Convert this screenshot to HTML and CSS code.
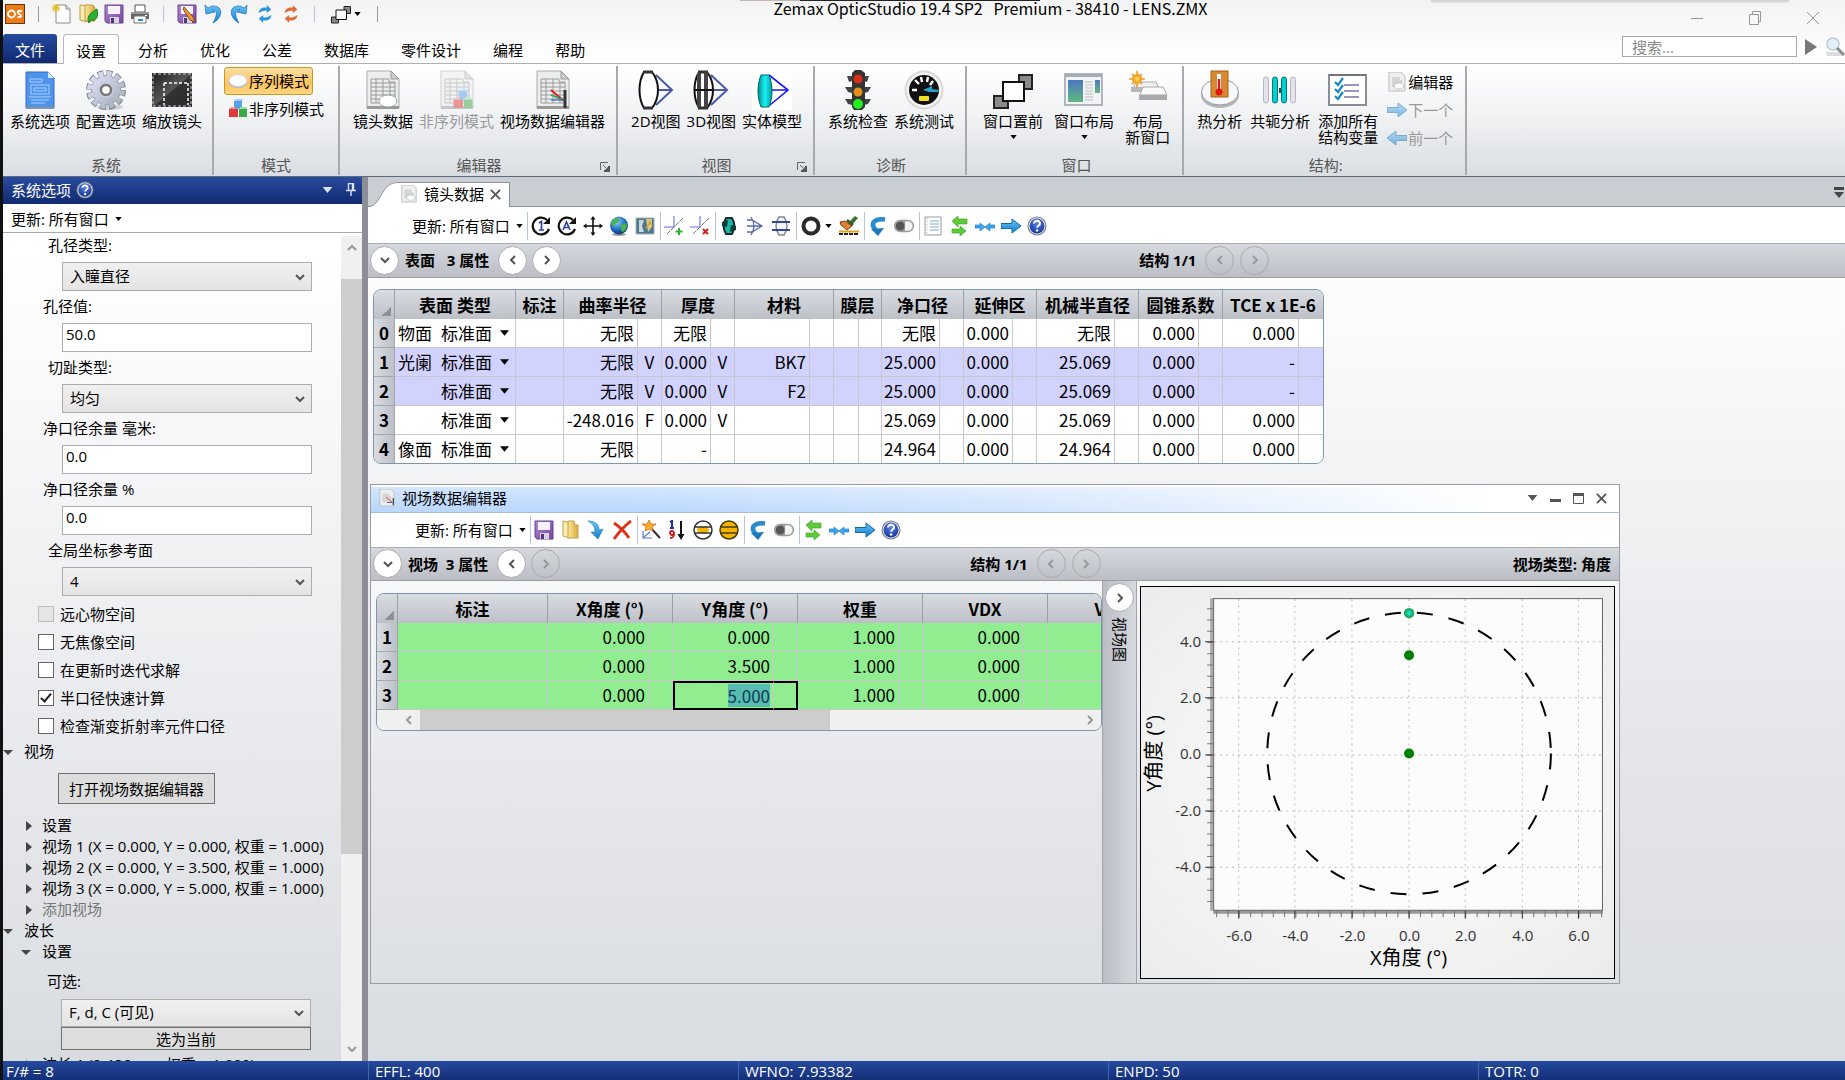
FILE: index.html
```html
<!DOCTYPE html>
<html lang="zh-CN">
<head>
<meta charset="utf-8">
<title>Zemax OpticStudio 19.4 SP2 Premium - 38410 - LENS.ZMX</title>
<link rel="stylesheet" href="styles.css">
</head>
<body>
<svg class="defs" aria-hidden="true">
  <defs>
    <linearGradient id="gBlue" x1="0" y1="0" x2="0" y2="1"><stop offset="0" stop-color="#6cc4f4"/><stop offset="1" stop-color="#0e7fd0"/></linearGradient>
    <linearGradient id="gGrey" x1="0" y1="0" x2="1" y2="1"><stop offset="0" stop-color="#e2e0fa"/><stop offset="1" stop-color="#a4b0ba"/></linearGradient>
    <linearGradient id="gDark" x1="0" y1="0" x2="1" y2="1"><stop offset="0" stop-color="#222"/><stop offset=".5" stop-color="#555"/><stop offset=".52" stop-color="#333"/><stop offset="1" stop-color="#2a2a2a"/></linearGradient>
    <linearGradient id="gFolder" x1="0" y1="0" x2="1" y2="0"><stop offset="0" stop-color="#f8e8a0"/><stop offset="1" stop-color="#dca83c"/></linearGradient>
    <linearGradient id="gPurple" x1="0" y1="0" x2="1" y2="1"><stop offset="0" stop-color="#b48ad0"/><stop offset="1" stop-color="#7444a0"/></linearGradient>
    <linearGradient id="gShot" x1="0" y1="0" x2="0" y2="1"><stop offset="0" stop-color="#4a78c0"/><stop offset="1" stop-color="#60b880"/></linearGradient>
    <linearGradient id="gLens" x1="0" y1="0" x2="1" y2="0"><stop offset="0" stop-color="#008a90"/><stop offset=".5" stop-color="#18f4f4"/><stop offset="1" stop-color="#009aa0"/></linearGradient>
    <radialGradient id="gGlobe" cx=".4" cy=".3" r=".8"><stop offset="0" stop-color="#8ad0ff"/><stop offset=".6" stop-color="#1a62b8"/><stop offset="1" stop-color="#082a60"/></radialGradient>
    <radialGradient id="gHelp" cx=".5" cy=".3" r=".8"><stop offset="0" stop-color="#5a84e8"/><stop offset="1" stop-color="#0c2a90"/></radialGradient>
    <radialGradient id="gSun"><stop offset="0" stop-color="#ffe060"/><stop offset="1" stop-color="#f09010"/></radialGradient>
    <radialGradient id="gPoint"><stop offset="0" stop-color="#20f0f0"/><stop offset=".9" stop-color="#10a050"/><stop offset="1" stop-color="#008000"/></radialGradient>
    <radialGradient id="gChart" cx=".5" cy=".5" r=".75"><stop offset="0" stop-color="#fff"/><stop offset="1" stop-color="#eaeaea"/></radialGradient>
  </defs>
  <symbol id="caret" viewBox="0 0 8 5"><path d="M0 0h8l-4 5z" fill="currentColor"/></symbol>
  <symbol id="chev-d" viewBox="0 0 12 12"><path d="M2 4l4 4 4-4" fill="none" stroke="currentColor" stroke-width="2"/></symbol>
  <symbol id="chev-u" viewBox="0 0 12 12"><path d="M2 8l4-4 4 4" fill="none" stroke="currentColor" stroke-width="2"/></symbol>
  <symbol id="chev-l" viewBox="0 0 12 12"><path d="M8 2L4 6l4 4" fill="none" stroke="currentColor" stroke-width="2"/></symbol>
  <symbol id="chev-r" viewBox="0 0 12 12"><path d="M4 2l4 4-4 4" fill="none" stroke="currentColor" stroke-width="2"/></symbol>
  <symbol id="cross" viewBox="0 0 12 12"><path d="M1 1l10 10M11 1L1 11" fill="none" stroke="currentColor" stroke-width="2"/></symbol>
  <symbol id="help" viewBox="0 0 20 20"><circle cx="10" cy="10" r="9.5" fill="#777c84"/><circle cx="10" cy="10" r="8.4" fill="#e0e2e6"/><circle cx="10" cy="10" r="7.4" fill="url(#gHelp)"/><path d="M7 7.6c0-3.8 6.2-3.6 6 0-.1 2-2.8 2-2.8 4.2" fill="none" stroke="#fff" stroke-width="2"/><circle cx="10.1" cy="14.5" r="1.3" fill="#fff"/></symbol>

  <symbol id="new" viewBox="0 0 20 20"><path d="M4 1h10l4 4v14H4z" fill="#fdfdfd" stroke="#8a8a8a"/><path d="M14 1v4h4" fill="#ddd" stroke="#8a8a8a"/><path d="M4 0v8M0 4h8M1 1l6 6M7 1L1 7" stroke="#e6c020" stroke-width="1.3"/></symbol>
  <symbol id="open" viewBox="0 0 20 20"><path d="M2 1l7 1v16l-7-2z" fill="#fbeeb4" stroke="#c09a40"/><path d="M7 1h8l2 3v13H7z" fill="url(#gFolder)" stroke="#c09a40"/><path d="M19 5c2 8-1 12-6 11l-2 3c-3-6 1-10 8-14z" fill="#30b030" stroke="#147c1c"/></symbol>
  <symbol id="folder" viewBox="0 0 20 20"><path d="M3 1l7 2v15l-7-2z" fill="#fbeeb4" stroke="#c8a040"/><path d="M8 1h6l1 4h3v13H8z" fill="url(#gFolder)" stroke="#c8a040"/></symbol>
  <symbol id="save" viewBox="0 0 20 20"><path d="M1 1h18v18H3l-2-2z" fill="url(#gPurple)" stroke="#684090"/><path d="M4 2h12v8H4z" fill="#f4f2fa"/><path d="M6 13h9v6H6z" fill="#d8d4de"/><path d="M7 14h3v5H7z" fill="#503878"/></symbol>
  <symbol id="saveedit" viewBox="0 0 20 20"><use href="#save"/><path d="M7 3l9 10 2 5-5-2L6 5z" fill="#f09a30" stroke="#8a4a20"/></symbol>
  <symbol id="print" viewBox="0 0 20 20"><path d="M5 1h10v7H5z" fill="#fff" stroke="#555"/><path d="M1 8h18v7H1z" fill="#666"/><path d="M1 8h18v2H1z" fill="#999"/><path d="M4 12h12v7H4z" fill="#fff" stroke="#777"/><path d="M8 15h5v2H8z" fill="#2a90d0"/><path d="M15 11h2v1h-2z" fill="#fff"/></symbol>
  <symbol id="undo" viewBox="0 0 20 20"><path d="M2 1l1 9 9-2-3-2c5-1 6 5 1 13 10-5 11-18-1-17L5 4z" fill="url(#gBlue)" stroke="#1a70b8" stroke-width=".7"/></symbol>
  <symbol id="redo" viewBox="0 0 20 20"><path d="M18 1l-1 9-9-2 3-2c-5-1-6 5-1 13C0 14-1 1 11 2l4 2z" fill="url(#gBlue)" stroke="#1a70b8" stroke-width=".7"/></symbol>
  <symbol id="refresh" viewBox="0 0 20 20"><path d="M3 9c0-5 5-7 9-6V0l5 5-5 4V6C8 6 6 7 3 9zM17 11c0 5-5 7-9 6v3l-5-5 5-4v3c4 0 6-1 9-3z" fill="currentColor"/></symbol>
  <symbol id="wins" viewBox="0 0 40 40"><path d="M26 5h13v14H26zM1 26h14v12H1z" fill="#8a8a8a" stroke="#222" stroke-width="2"/><path d="M10 12h21v19H10z" fill="#fff" stroke="#111" stroke-width="2"/></symbol>

  <symbol id="b-doc" viewBox="0 0 40 40"><path d="M6 2h22l6 6v30H6z" fill="#4f93ea" stroke="#2c6cc8"/><path d="M28 2v6h6z" fill="#d8e8fc"/><path d="M6 37h28v2H6z" fill="#8a929c"/><path d="M10 9h12v3H10zM11 15h18v9H11zM14 18h12v3H14zM9 27h22M11 30h18M11 33h14" fill="none" stroke="#a8d0ff"/></symbol>
  <symbol id="b-gear" viewBox="0 0 40 40"><ellipse cx="24" cy="37" rx="13" ry="3" fill="#cfd2d4"/><circle cx="20" cy="20" r="16.5" fill="none" stroke="#7c8494" stroke-width="7" stroke-dasharray="5.600 3.040"/><circle cx="20" cy="20" r="14.500" fill="url(#gGrey)" stroke="#8c94a4"/><circle cx="20" cy="20" r="16" fill="none" stroke="url(#gGrey)" stroke-width="6" stroke-dasharray="4.400 3.978" stroke-dashoffset="-.5"/><circle cx="20" cy="20" r="8" fill="#c8ccd8"/><circle cx="20" cy="20" r="5" fill="#fff" stroke="#777" stroke-width="2.500"/></symbol>
  <symbol id="b-scale" viewBox="0 0 40 40"><path d="M0 3h40v34H0z" fill="url(#gDark)"/><path d="M1 4h38v32H1z" fill="none" stroke="#ccc" stroke-width="1" stroke-dasharray="3 2"/><path d="M12 13v22M36 13v22M12 13h24" fill="none" stroke="#fff" stroke-width="1.500" stroke-dasharray="3 2"/></symbol>
  <symbol id="b-sheet" viewBox="0 0 40 40"><path d="M4 1h24l8 8v29H4z" fill="#eceeee" stroke="#aaa"/><path d="M28 1v8h8z" fill="#ccc" stroke="#999"/><path d="M4 36h32v3H4z" fill="#999"/><path d="M8 9h18v3h6v21H8zM8 13h24M8 17h24M8 21h24M8 25h24M8 29h24M13 9v24M20 9v24M27 13v20" fill="none" stroke="#999"/></symbol>
  <symbol id="b-lens" viewBox="0 0 40 40"><use href="#b-sheet"/><ellipse cx="25" cy="31" rx="9" ry="6" fill="#fff" stroke="#98a8b0"/></symbol>
  <symbol id="cubes" viewBox="0 0 20 20"><path d="M6 2h8v8H6z" fill="#5aa0e8"/><path d="M6 2l2-2h7l-1 2z" fill="#a0ccff"/><path d="M1 10h9v8H1z" fill="#e03838"/><path d="M1 10l2-2h4v2z" fill="#ff9090"/><path d="M11 10h8v8h-8z" fill="#38a848"/><path d="M11 10l1-2h6l1 2z" fill="#90e0a0"/></symbol>
  <symbol id="b-nsc" viewBox="0 0 40 40"><use href="#b-sheet"/><use href="#cubes" x="15" y="19" width="22" height="21"/></symbol>
  <symbol id="b-field" viewBox="0 0 40 40"><use href="#b-sheet"/><path d="M32 20v18" stroke="#333" stroke-width="3"/><path d="M18 20l13 11" stroke="#f01818" stroke-width="1.8"/><path d="M18 25l13 5" stroke="#20a050" stroke-width="1.5"/><path d="M18 30h13" stroke="#3060d0" stroke-width="1.2"/></symbol>
  <symbol id="lens" viewBox="0 0 20 20"><ellipse cx="10" cy="11" rx="9.5" ry="6" fill="#b4b8bc"/><ellipse cx="10" cy="9.5" rx="9" ry="6" fill="#fafcff" stroke="#ccd4dc"/></symbol>
  <symbol id="b-2d" viewBox="0 0 40 40"><path d="M20 5l16 15-16 15M23 20h13" fill="none" stroke="#4a5aa8" stroke-width="2"/><path d="M8 2h8c8 10 8 26 0 36H8c-6-10-6-26 0-36z" fill="#fff" stroke="#111" stroke-width="2"/><path d="M7 2h10M7 38h10" stroke="#333" stroke-width="3"/></symbol>
  <symbol id="b-3d" viewBox="0 0 40 40"><use href="#b-2d"/><path d="M8 3v34M15 3v34" stroke="#444" stroke-width="4"/><path d="M3 20h19" stroke="#111" stroke-width="2"/></symbol>
  <symbol id="b-solid" viewBox="0 0 40 40"><path d="M0 0h40v40H0z" fill="#fff"/><path d="M17 5l19 15-18 15M20 20h16" fill="none" stroke="#1818f0" stroke-width="1.6"/><path d="M9 5h8c4 10 4 22 0 32H9C5 27 5 15 9 5z" fill="url(#gLens)" stroke="#066"/></symbol>
  <symbol id="b-light" viewBox="0 0 40 40"><path d="M9 6h5v5l-3 1zM31 6h-5v5l3 1zM7 17h7v6l-4-1zM33 17h-7v6l4-1zM7 29h7v6l-4-1zM33 29h-7v6l4-1z" fill="#444"/><path d="M14 3l3-3h6l4 3v34l-3 3h-8l-2-3z" fill="#333"/><circle cx="20" cy="9" r="4.5" fill="#d83018"/><circle cx="20" cy="22" r="4.5" fill="#e09018"/><circle cx="20" cy="34" r="5" fill="#20f020"/></symbol>
  <symbol id="b-gauge" viewBox="0 0 40 40"><circle cx="20" cy="20" r="19.5" fill="#d8d8d8"/><circle cx="20" cy="20" r="17.5" fill="#f4f4f4"/><circle cx="20" cy="20" r="15" fill="#111"/><path d="M8 20h5M11 10l4 4M17 7l1 5M24 7l-1 5M29 11l-3 4" stroke="#fff" stroke-width="2.4"/><path d="M19 20l9-4v3l7 1-1 2h-9z" fill="#28a0d0"/><rect x="15" y="26" width="10" height="5" rx="1" fill="#f4e020"/></symbol>
  <symbol id="b-layout" viewBox="0 0 40 40"><path d="M1 4h37v31H1z" fill="#f2f4f6" stroke="#99a0a8" stroke-width="1.5"/><path d="M1 4h37v3H1z" fill="#a4acb4"/><path d="M4 10h15v22H4z" fill="url(#gShot)"/><path d="M21 12h8M21 15h8M21 18h8M21 21h8M21 24h8M21 27h8M21 30h8" stroke="#bbb"/><path d="M31 10h5v13h-5z" fill="url(#gShot)"/></symbol>
  <symbol id="b-newwin" viewBox="0 0 40 40"><path d="M8 12h20l3 7H5z" fill="#f0f0f0" stroke="#aaa"/><path d="M3 17h27v5H3z" fill="#b8b8b8"/><path d="M15 17h20l4 8H12z" fill="#fafafa" stroke="#aaa"/><path d="M11 25h28v5H11z" fill="#aaa"/><path d="M9 1v16M1 9h16M4 4l10 10M14 4L4 14" stroke="#f09a20" stroke-width="1.600"/><circle cx="9" cy="9" r="5" fill="url(#gSun)"/></symbol>
  <symbol id="b-thermal" viewBox="0 0 40 40"><ellipse cx="20" cy="25" rx="19" ry="13" fill="#b4b8bc"/><ellipse cx="20" cy="22" rx="18.500" ry="13" fill="#f6fafc" stroke="#999"/><rect x="11" y="1" width="17" height="26" fill="#d88830" stroke="#a86018"/><path d="M19 4v16" stroke="#fff" stroke-width="4"/><path d="M19 9v13" stroke="#d02020" stroke-width="2.5"/><circle cx="19" cy="22" r="3.5" fill="#e01818"/></symbol>
  <symbol id="b-conj" viewBox="0 0 40 40"><rect x="3.500" y="7" width="5" height="26" rx="2.500" fill="#e4e2ec" stroke="#b8b4c4"/><rect x="12.500" y="7" width="5" height="26" rx="2.500" fill="#00d0d0" stroke="#077"/><path d="M19 18h2v5h-2z" fill="#255"/><rect x="21.500" y="7" width="5" height="26" rx="2.500" fill="#00d0d0" stroke="#077"/><rect x="30.500" y="7" width="5" height="26" rx="2.500" fill="#e4e2ec" stroke="#b8b4c4"/></symbol>
  <symbol id="b-vars" viewBox="0 0 40 40"><path d="M1 5h37v30H1z" fill="#fff" stroke="#8a8e94" stroke-width="2"/><path d="M1 5h37" stroke="#707478" stroke-width="2"/><path d="M16 15h15M16 21h15M16 27h15" stroke="#7870a8" stroke-width="1.5"/><path d="M7 12l3 3 5-7M7 19l3 3 5-7M7 26l3 3 5-7" fill="none" stroke="#1a88c8" stroke-width="2.2"/></symbol>
  <symbol id="doc-s" viewBox="0 0 20 20"><path d="M2 0h12l4 4v15H2z" fill="#eef0f0" stroke="#bbb"/><path d="M5 5h8v3h2v7H5z" fill="#d4d6d6"/><ellipse cx="12" cy="14" rx="4.5" ry="3" fill="#fff" stroke="#aaa" stroke-width=".6"/></symbol>
  <symbol id="docf-s" viewBox="0 0 20 20"><path d="M2 0h12l4 4v15H2z" fill="#eef0f0" stroke="#bbb"/><path d="M5 5h8v3h2v7H5z" fill="#d4d6d6"/><path d="M9 9l7 6" stroke="#e03030"/><path d="M17 10v8" stroke="#555" stroke-width="1.6"/><path d="M10 15h6" stroke="#4060c0"/></symbol>
  <symbol id="ar-r" viewBox="0 0 20 20"><path d="M0 7.500h11V3l9 7-9 7v-4.500H0z" fill="url(#gBlue)" stroke="#1468b0"/></symbol>
  <symbol id="ar-l" viewBox="0 0 20 20"><path d="M20 7.500H9V3l-9 7 9 7v-4.500h11z" fill="url(#gBlue)" stroke="#1468b0"/></symbol>
  <symbol id="launch" viewBox="0 0 10 10"><path d="M.5 8V.5H8M3 3l3 3" fill="none" stroke="#666"/><path d="M9 4v5H4z" fill="#555"/><path d="M4 9h5V4" fill="none" stroke="#555" stroke-width="2"/></symbol>
  <symbol id="search" viewBox="0 0 20 20"><path d="M1 15h13l4 4H2z" fill="#ddd"/><circle cx="8" cy="7" r="6" fill="#e2f0fa" stroke="#c0c8d0" stroke-width="1.5"/><path d="M12 11l7 7" stroke="#8a8a8a" stroke-width="3"/></symbol>

  <symbol id="rot1" viewBox="0 0 20 20"><path d="M16 4a8.400 8.400 0 1 0 2 9" fill="none" stroke="#111" stroke-width="2.200"/><path d="M19 1v7h-7z" fill="#111"/><path d="M8 7l2.500-1.500V14M8 14h5" fill="none" stroke="#2a3ea0" stroke-width="1.600"/></symbol>
  <symbol id="rotA" viewBox="0 0 20 20"><path d="M16 4a8.400 8.400 0 1 0 2 9" fill="none" stroke="#111" stroke-width="2.200"/><path d="M19 1v7h-7z" fill="#111"/><path d="M6 14L9.500 6 13 14M7.500 11.500h4" fill="none" stroke="#2a3ea0" stroke-width="1.600"/></symbol>
  <symbol id="move" viewBox="0 0 20 20"><path d="M10 2v16M2 10h16" stroke="#111" stroke-width="1.6"/><path d="M7.500 3.500L10 0l2.500 3.500zM7.500 16.500L10 20l2.500-3.500zM3.500 7.500L0 10l3.500 2.500zM16.500 7.500L20 10l-3.500 2.500z" fill="#111"/></symbol>
  <symbol id="globe" viewBox="0 0 20 20"><ellipse cx="10" cy="18.500" rx="7" ry="1.500" fill="#999"/><circle cx="10" cy="9.500" r="9" fill="url(#gGlobe)"/><path d="M5 3c4-2 6 0 5 3l-4 2-1 3-3-3zM12 9l5-2c2 4 0 8-4 9l-1-3z" fill="#48b848"/></symbol>
  <symbol id="map" viewBox="0 0 20 20"><path d="M1 2h18v16H1z" fill="#4a7890" stroke="#a8b0b4"/><path d="M4 4h5l-2 6 2 6H4z" fill="#cfd8d8"/><path d="M11 3h6v8l-4 5z" fill="#d8c888"/><path d="M11 12l4-6 2 3" fill="none" stroke="#e0a020" stroke-width="1.500"/></symbol>
  <symbol id="axadd" viewBox="0 0 20 20"><path d="M10 0v11H0" fill="none" stroke="#9a9af0" stroke-width="1.600"/><path d="M19 2L3 18" stroke="#777" stroke-dasharray="5 1"/><path d="M15 12v7M11.500 15.500h7" stroke="#30b030" stroke-width="2"/></symbol>
  <symbol id="axdel" viewBox="0 0 20 20"><path d="M10 0v11H0" fill="none" stroke="#9a9af0" stroke-width="1.600"/><path d="M19 2L3 18" stroke="#777" stroke-dasharray="5 1"/><path d="M13 13l5 5M18 13l-5 5" stroke="#d82020" stroke-width="2"/></symbol>
  <symbol id="lensrot" viewBox="0 0 20 20"><path d="M7 2h6c3 5 3 11 0 16H7C4 13 4 7 7 2z" fill="#18b8a8" stroke="#1a2a2a" stroke-width="2"/><path d="M3 10V6l6-2-1 7zM17 10v4l-6 2 1-7z" fill="#143a38"/></symbol>
  <symbol id="lensray" viewBox="0 0 20 20"><path d="M6 1c4 6 4 12 0 18M2 4h5l10 6-10 6H2M2 10h15" fill="none" stroke="#5a6ab0" stroke-width="1.300"/></symbol>
  <symbol id="lensbox" viewBox="0 0 20 20"><path d="M8 1h5c4 6 4 12 0 18H8C4 13 4 7 8 1z" fill="#f4f4fa" stroke="#888" stroke-width="1.400"/><path d="M1 6h18M1 14h18" stroke="#3048a0" stroke-width="1.800"/></symbol>
  <symbol id="ring" viewBox="0 0 20 20"><circle cx="10" cy="10" r="7.500" fill="none" stroke="#2a2a2a" stroke-width="4"/></symbol>
  <symbol id="brush" viewBox="0 0 20 20"><path d="M9 7l7-7 3 2-7 8z" fill="#3c7030"/><path d="M1 6l5-1 7 5-5 4-6-5z" fill="#e08030" stroke="#803c10"/><path d="M8 4l6 5" stroke="#355c28" stroke-width="2.500"/><path d="M0 15.500h20" stroke="#e0a020" stroke-width="2"/><path d="M0 18h20" stroke="#222" stroke-width="2" stroke-dasharray="4 1"/></symbol>
  <symbol id="bluehook" viewBox="0 0 20 20"><path d="M17 3.500C7 2 1 7 8 14" fill="none" stroke="#2a8ccc" stroke-width="4.500"/><path d="M3 13l13-1-6 8z" fill="#1a78bc"/></symbol>
  <symbol id="toggle" viewBox="0 0 20 20"><rect x=".7" y="4.500" width="18.600" height="11" rx="5.500" fill="#f2f2f2" stroke="#999" stroke-width="1.400"/><path d="M6 4.500h5v11H6z" fill="#999"/><circle cx="6" cy="10" r="4.500" fill="#555"/></symbol>
  <symbol id="list" viewBox="0 0 20 20"><path d="M2 1h16v18H2z" fill="#fff" stroke="#999"/><path d="M4 2v16" stroke="#bbb" stroke-dasharray="1 1"/><path d="M7 5h9M7 8h9M7 11h9M7 14h9" stroke="#a8c8dc" stroke-width="1.400"/></symbol>
  <symbol id="swap" viewBox="0 0 20 20"><path d="M3 5l6-5v3h9v5H9v3zM17 15l-6 5v-3H3v-4h8v-3z" fill="#5ccc38" stroke="#3c9c20" stroke-width=".6"/></symbol>
  <symbol id="squeeze" viewBox="0 0 20 20"><path d="M0 9h5V7l5 4-5 4v-3H0zM20 9h-5V7l-5 4 5 4v-3h5z" fill="#38a8f0" stroke="#1870b8" stroke-width=".6"/></symbol>
  <symbol id="curvedn" viewBox="0 0 20 20"><path d="M2 1c8 0 11 4 11 9l4-1-5 10-7-7h4C9 7 7 4 2 1z" fill="url(#gBlue)" stroke="#1878b8" stroke-width=".6"/></symbol>
  <symbol id="redx" viewBox="0 0 20 20"><path d="M2 3c6 4 11 9 15 15M19 1C12 6 7 12 2 19" fill="none" stroke="#e03018" stroke-width="2.800"/></symbol>
  <symbol id="wand" viewBox="0 0 20 20"><path d="M9 7l10 11" stroke="#333" stroke-width="2"/><path d="M8 0l2 4h5l-4 3 1 4-4-2-4 2 1-4-4-3h5z" fill="#f8b020" stroke="#d85838" stroke-width=".7"/><path d="M2 11v7h9M3 17l6-5" fill="none" stroke="#5a78c0" stroke-width="1.200"/></symbol>
  <symbol id="sort" viewBox="0 0 20 20"><path d="M3 2l2-1v7M3 8h4" fill="none" stroke="#2030a0" stroke-width="2"/><circle cx="5" cy="13" r="2" fill="none" stroke="#d01818" stroke-width="1.800"/><path d="M7 13c0 4-1 5-4 5" fill="none" stroke="#d01818" stroke-width="1.800"/><path d="M14 1v14" stroke="#111" stroke-width="2"/><path d="M10.500 14h7L14 20z" fill="#111"/></symbol>
  <symbol id="circ1" viewBox="0 0 20 20"><circle cx="10" cy="10" r="9" fill="#fff" stroke="#333" stroke-width="1.500"/><ellipse cx="10" cy="10" rx="6" ry="3.500" fill="#f4b400"/><path d="M2 7h16M2 13h16" stroke="#333" stroke-width="1.300"/></symbol>
  <symbol id="circ2" viewBox="0 0 20 20"><circle cx="10" cy="10" r="9" fill="#f4b400" stroke="#4a3c00" stroke-width="1.500"/><path d="M2 7h16M2 13h16" stroke="#4a3c00" stroke-width="1.300"/></symbol>
</svg>

<header class="titlebar">
  <div class="qat">
    <svg class="i20 logo" viewBox="0 0 20 20"><path d="M0 0h20v20H0z" fill="#5a3a18"/><path d="M1 1h18v18H1z" fill="#ee7c16"/><circle cx="6.500" cy="10" r="3.500" fill="none" stroke="#fff" stroke-width="1.800"/><path d="M17 7.500c-4-2-5.500 1-3 2.300s3.500 4-1.500 3.200" fill="none" stroke="#fff" stroke-width="1.800"/></svg>
    <span class="qsep"></span>
    <button aria-label="新建"><svg class="i20"><use href="#new"/></svg></button>
    <button aria-label="打开"><svg class="i20"><use href="#open"/></svg></button>
    <button aria-label="保存"><svg class="i20"><use href="#save"/></svg></button>
    <button aria-label="打印"><svg class="i20"><use href="#print"/></svg></button>
    <span class="qsep light"></span>
    <button aria-label="另存为"><svg class="i20"><use href="#saveedit"/></svg></button>
    <button aria-label="撤消"><svg class="i20"><use href="#undo"/></svg></button>
    <button aria-label="重做"><svg class="i20"><use href="#redo"/></svg></button>
    <button aria-label="更新" class="blue"><svg class="i20"><use href="#refresh"/></svg></button>
    <button aria-label="全部更新" class="orange"><svg class="i20"><use href="#refresh"/></svg></button>
    <span class="qsep light"></span>
    <button aria-label="窗口" class="winsbtn"><svg class="i20"><use href="#wins"/></svg><svg class="caret"><use href="#caret"/></svg></button>
    <span class="qsep"></span>
  </div>
  <div class="apptitle">Zemax OpticStudio 19.4 SP2&nbsp;&nbsp; Premium - 38410 - LENS.ZMX</div>
  <div class="winctl">
    <button aria-label="最小化"><svg viewBox="0 0 14 14"><path d="M1 7.500h12" stroke="#999"/></svg></button>
    <button aria-label="还原"><svg viewBox="0 0 14 14"><path d="M1.500 3.500h9v10h-9zM4.500 3v-2.500h8v10H11" fill="none" stroke="#999"/></svg></button>
    <button aria-label="关闭"><svg viewBox="0 0 14 14"><path d="M1 1l12 12M13 1L1 13" stroke="#999"/></svg></button>
  </div>
</header>

<nav class="tabs">
  <button class="tab file">文件</button>
  <button class="tab active">设置</button>
  <button class="tab">分析</button>
  <button class="tab">优化</button>
  <button class="tab">公差</button>
  <button class="tab">数据库</button>
  <button class="tab">零件设计</button>
  <button class="tab">编程</button>
  <button class="tab">帮助</button>
  <form class="search">
    <input type="search" placeholder="搜索..." aria-label="搜索">
    <button type="button" aria-label="下一条"><svg width="12" height="16" viewBox="0 0 12 16"><path d="M0 0l12 8-12 8z" fill="#777"/></svg></button>
    <button type="button" aria-label="查找"><svg class="i20"><use href="#search"/></svg></button>
  </form>
</nav>

<section class="ribbon">
  <div class="group g-sys"><div class="items">
    <button class="big"><svg><use href="#b-doc"/></svg>系统选项</button>
    <button class="big"><svg><use href="#b-gear"/></svg>配置选项</button>
    <button class="big"><svg><use href="#b-scale"/></svg>缩放镜头</button>
  </div><h2>系统</h2></div>
  <div class="group g-mode"><div class="items column">
    <button class="small on"><svg><use href="#lens"/></svg>序列模式</button>
    <button class="small"><svg><use href="#cubes"/></svg>非序列模式</button>
  </div><h2>模式</h2></div>
  <div class="group"><div class="items">
    <button class="big"><svg><use href="#b-lens"/></svg>镜头数据</button>
    <button class="big" disabled><svg><use href="#b-nsc"/></svg>非序列模式</button>
    <button class="big"><svg><use href="#b-field"/></svg>视场数据编辑器</button>
  </div><h2>编辑器</h2><svg class="launch"><use href="#launch"/></svg></div>
  <div class="group"><div class="items">
    <button class="big"><svg><use href="#b-2d"/></svg>2D视图</button>
    <button class="big"><svg><use href="#b-3d"/></svg>3D视图</button>
    <button class="big"><svg><use href="#b-solid"/></svg>实体模型</button>
  </div><h2>视图</h2><svg class="launch"><use href="#launch"/></svg></div>
  <div class="group"><div class="items">
    <button class="big"><svg><use href="#b-light"/></svg>系统检查</button>
    <button class="big"><svg><use href="#b-gauge"/></svg>系统测试</button>
  </div><h2>诊断</h2></div>
  <div class="group wide"><div class="items">
    <button class="big"><svg><use href="#wins"/></svg>窗口置前<svg class="caret"><use href="#caret"/></svg></button>
    <button class="big"><svg><use href="#b-layout"/></svg>窗口布局<svg class="caret"><use href="#caret"/></svg></button>
    <button class="big"><svg><use href="#b-newwin"/></svg>布局<br>新窗口</button>
  </div><h2>窗口</h2></div>
  <div class="group g-conf"><div class="items">
    <button class="big"><svg><use href="#b-thermal"/></svg>热分析</button>
    <button class="big"><svg><use href="#b-conj"/></svg>共轭分析</button>
    <button class="big"><svg><use href="#b-vars"/></svg>添加所有<br>结构变量</button>
    <div class="column">
      <button class="small"><svg><use href="#doc-s"/></svg>编辑器</button>
      <button class="small" disabled><svg><use href="#ar-r"/></svg>下一个</button>
      <button class="small" disabled><svg><use href="#ar-l"/></svg>前一个</button>
    </div>
  </div><h2>结构:</h2></div>
</section>

<main>
  <aside class="side">
    <div class="sidehead"><h2>系统选项</h2><svg class="i18"><use href="#help"/></svg>
      <span class="sidectl"><svg class="dn"><use href="#caret"/></svg><svg width="10" height="13" viewBox="0 0 10 13"><path d="M2.500 7V.500h5V7M0 7.500h10M5 8v5M6.500 1v6" fill="none" stroke="#dce4f4" stroke-width="1.400"/></svg></span></div>
    <button class="update">更新: 所有窗口<svg class="caret"><use href="#caret"/></svg></button>
    <div class="sidescroll">
      <form class="sidebody">
        <div class="field"><label class="in" for="f1">孔径类型:</label><div class="sel"><select id="f1"><option>入瞳直径</option></select><svg><use href="#chev-d"/></svg></div></div>
        <div class="field"><label for="f2">孔径值:</label><input id="f2" type="text" value="50.0"></div>
        <div class="field"><label class="in" for="f3">切趾类型:</label><div class="sel"><select id="f3"><option>均匀</option></select><svg><use href="#chev-d"/></svg></div></div>
        <div class="field"><label for="f4">净口径余量 毫米:</label><input id="f4" type="text" value="0.0"></div>
        <div class="field"><label for="f5">净口径余量 %</label><input id="f5" type="text" value="0.0"></div>
        <div class="field"><label class="in" for="f6">全局坐标参考面</label><div class="sel"><select id="f6"><option>4</option></select><svg><use href="#chev-d"/></svg></div></div>
        <div class="checks">
          <label><input type="checkbox" disabled>远心物空间</label>
          <label><input type="checkbox">无焦像空间</label>
          <label><input type="checkbox">在更新时迭代求解</label>
          <label><input type="checkbox" checked>半口径快速计算</label>
          <label><input type="checkbox">检查渐变折射率元件口径</label>
        </div>
        <div class="node top open">视场</div>
        <button type="button" class="openfield">打开视场数据编辑器</button>
        <div class="node">设置</div>
        <div class="node">视场 1 (X = 0.000, Y = 0.000, 权重 = 1.000)</div>
        <div class="node">视场 2 (X = 0.000, Y = 3.500, 权重 = 1.000)</div>
        <div class="node">视场 3 (X = 0.000, Y = 5.000, 权重 = 1.000)</div>
        <div class="node dim">添加视场</div>
        <div class="node top open">波长</div>
        <div class="node open">设置</div>
        <div class="wave">
          <label for="f7">可选:</label>
          <div class="sel"><select id="f7"><option>F, d, C (可见)</option></select><svg><use href="#chev-d"/></svg></div>
          <button type="button">选为当前</button>
        </div>
        <div class="node">波长 1 (0.486 um, 权重 = 1.000)</div>
      </form>
      <div class="vbar"><svg><use href="#chev-u"/></svg><div class="vthumb"></div><svg><use href="#chev-d"/></svg></div>
    </div>
  </aside>

  <section class="work">
    <div class="doctabs">
      <svg class="tabcurve" viewBox="0 0 30 25"><path d="M0 25C14 25 12 0 30 0v25z" fill="#fff"/><path d="M0 24.500C14 24.500 12 .500 30 .500" fill="none" stroke="#8b929a"/></svg>
      <div class="doctab"><svg class="i18"><use href="#doc-s"/></svg>镜头数据<button aria-label="关闭"><svg><use href="#cross"/></svg></button></div>
      <svg class="tabmenu" width="10" height="11" viewBox="0 0 10 11"><path d="M0 0h10v3H0zM0 5h10l-5 6z" fill="#444"/></svg>
    </div>
    <div class="toolbar">
      <button class="upd">更新: 所有窗口<svg class="caret"><use href="#caret"/></svg></button>
      <button aria-label="更新一"><svg><use href="#rot1"/></svg></button><button aria-label="自动更新"><svg><use href="#rotA"/></svg></button><button aria-label="移动"><svg><use href="#move"/></svg></button><button aria-label="全局"><svg><use href="#globe"/></svg></button><button aria-label="地图"><svg><use href="#map"/></svg></button><span class="sep"></span>
      <button aria-label="添加坐标"><svg><use href="#axadd"/></svg></button><button aria-label="删除坐标"><svg><use href="#axdel"/></svg></button><span class="sep"></span>
      <button aria-label="旋转元件"><svg><use href="#lensrot"/></svg></button><button aria-label="光线"><svg><use href="#lensray"/></svg></button><button aria-label="反射"><svg><use href="#lensbox"/></svg></button><span class="sep"></span>
      <button class="drop" aria-label="孔径"><svg><use href="#ring"/></svg><svg class="caret"><use href="#caret"/></svg></button><button aria-label="清除"><svg><use href="#brush"/></svg></button><span class="sep"></span>
      <button aria-label="重新加载"><svg><use href="#bluehook"/></svg></button><button aria-label="切换"><svg><use href="#toggle"/></svg></button><span class="sep"></span>
      <button aria-label="列表"><svg><use href="#list"/></svg></button><button aria-label="交换"><svg><use href="#swap"/></svg></button><button aria-label="收缩"><svg><use href="#squeeze"/></svg></button><button aria-label="前往"><svg><use href="#ar-r"/></svg></button><button aria-label="帮助"><svg><use href="#help"/></svg></button>
    </div>
    <div class="props">
      <button class="round" aria-label="展开"><svg><use href="#chev-d"/></svg></button><b class="what">表面&nbsp;&nbsp; 3 属性</b><button class="round" aria-label="上一项"><svg><use href="#chev-l"/></svg></button><button class="round" aria-label="下一项"><svg><use href="#chev-r"/></svg></button>
      <div class="conf"><b>结构 1/1</b><button class="round" disabled aria-label="上一结构"><svg><use href="#chev-l"/></svg></button><button class="round" disabled aria-label="下一结构"><svg><use href="#chev-r"/></svg></button></div>
    </div>
    <div class="canvas">
      <div class="gridbox">
        <table class="grid lensgrid">
          <colgroup><col class="w21"><col class="w121"><col class="w48"><col class="w74"><col class="w24"><col class="w49"><col class="w24"><col class="w75"><col class="w24"><col class="w25"><col class="w23"><col class="w58"><col class="w24"><col class="w49"><col class="w24"><col class="w78"><col class="w24"><col class="w60"><col class="w24"><col class="w76"><col class="w24"></colgroup>
          <thead><tr><th class="corner"></th><th>表面 类型</th><th>标注</th><th colspan="2">曲率半径</th><th colspan="2">厚度</th><th colspan="2">材料</th><th colspan="2">膜层</th><th colspan="2">净口径</th><th colspan="2">延伸区</th><th colspan="2">机械半直径</th><th colspan="2">圆锥系数</th><th colspan="2">TCE x 1E-6</th></tr></thead>
          <tbody>
            <tr><th>0</th><td><div class="type"><span>物面</span><button>标准面<svg class="caret"><use href="#caret"/></svg></button></div></td><td></td><td>无限</td><td></td><td>无限</td><td></td><td></td><td></td><td></td><td></td><td>无限</td><td></td><td>0.000</td><td></td><td>无限</td><td></td><td>0.000</td><td></td><td>0.000</td><td></td></tr>
            <tr class="hl"><th>1</th><td><div class="type"><span>光阑</span><button>标准面<svg class="caret"><use href="#caret"/></svg></button></div></td><td></td><td>无限</td><td class="c">V</td><td>0.000</td><td class="c">V</td><td>BK7</td><td></td><td></td><td></td><td>25.000</td><td></td><td>0.000</td><td></td><td>25.069</td><td></td><td>0.000</td><td></td><td>-</td><td></td></tr>
            <tr class="hl"><th>2</th><td><div class="type"><span></span><button>标准面<svg class="caret"><use href="#caret"/></svg></button></div></td><td></td><td>无限</td><td class="c">V</td><td>0.000</td><td class="c">V</td><td>F2</td><td></td><td></td><td></td><td>25.000</td><td></td><td>0.000</td><td></td><td>25.069</td><td></td><td>0.000</td><td></td><td>-</td><td></td></tr>
            <tr><th>3</th><td><div class="type"><span></span><button>标准面<svg class="caret"><use href="#caret"/></svg></button></div></td><td></td><td>-248.016</td><td class="c">F</td><td>0.000</td><td class="c">V</td><td></td><td></td><td></td><td></td><td>25.069</td><td></td><td>0.000</td><td></td><td>25.069</td><td></td><td>0.000</td><td></td><td>0.000</td><td></td></tr>
            <tr><th>4</th><td><div class="type"><span>像面</span><button>标准面<svg class="caret"><use href="#caret"/></svg></button></div></td><td></td><td>无限</td><td></td><td>-</td><td></td><td></td><td></td><td></td><td></td><td>24.964</td><td></td><td>0.000</td><td></td><td>24.964</td><td></td><td>0.000</td><td></td><td>0.000</td><td></td></tr>
          </tbody>
        </table>
      </div>

      <article class="window">
        <div class="wintitle"><svg class="i18"><use href="#docf-s"/></svg><h2>视场数据编辑器</h2>
          <span class="winbtns"><svg width="11" height="6"><use href="#caret"/></svg><svg width="11" height="12" viewBox="0 0 11 12"><path d="M0 7h11v3H0z" fill="#555"/></svg><svg width="11" height="11" viewBox="0 0 11 11"><path d="M.500 1h10v9.500H.500z" fill="none" stroke="#555"/><path d="M0 0h11v3H0z" fill="#555"/></svg><svg width="11" height="11"><use href="#cross"/></svg></span></div>
        <div class="toolbar">
          <button class="upd">更新: 所有窗口<svg class="caret"><use href="#caret"/></svg></button>
          <button aria-label="保存"><svg><use href="#save"/></svg></button><button aria-label="打开"><svg><use href="#folder"/></svg></button><button aria-label="插入"><svg><use href="#curvedn"/></svg></button><button aria-label="删除"><svg><use href="#redx"/></svg></button><span class="sep"></span>
          <button aria-label="向导"><svg><use href="#wand"/></svg></button><button aria-label="排序"><svg><use href="#sort"/></svg></button><button aria-label="渐晕"><svg><use href="#circ1"/></svg></button><button aria-label="清除渐晕"><svg><use href="#circ2"/></svg></button><span class="sep"></span>
          <button aria-label="重新加载"><svg><use href="#bluehook"/></svg></button><button aria-label="切换"><svg><use href="#toggle"/></svg></button><span class="sep"></span>
          <button aria-label="交换"><svg><use href="#swap"/></svg></button><button aria-label="收缩"><svg><use href="#squeeze"/></svg></button><button aria-label="前往"><svg><use href="#ar-r"/></svg></button><button aria-label="帮助"><svg><use href="#help"/></svg></button>
        </div>
        <div class="props">
          <button class="round" aria-label="展开"><svg><use href="#chev-d"/></svg></button><b class="what">视场&nbsp; 3 属性</b><button class="round" aria-label="上一项"><svg><use href="#chev-l"/></svg></button><button class="round" disabled aria-label="下一项"><svg><use href="#chev-r"/></svg></button>
          <div class="conf"><b>结构 1/1</b><button class="round" disabled aria-label="上一结构"><svg><use href="#chev-l"/></svg></button><button class="round" disabled aria-label="下一结构"><svg><use href="#chev-r"/></svg></button></div>
          <b class="ftype">视场类型: 角度</b>
        </div>
        <div class="winbody">
          <div class="fieldpane">
            <div class="gridbox clip">
              <table class="grid fieldgrid">
                <colgroup><col class="w21"><col class="w150"><col class="w101"><col class="w24"><col class="w101"><col class="w24"><col class="w101"><col class="w24"><col class="w101"><col class="w24"><col class="w101"><col class="w24"></colgroup>
                <thead><tr><th class="corner"></th><th>标注</th><th colspan="2">X角度 (°)</th><th colspan="2">Y角度 (°)</th><th colspan="2">权重</th><th colspan="2">VDX</th><th colspan="2">VDY</th></tr></thead>
                <tbody>
                  <tr><th>1</th><td></td><td>0.000</td><td></td><td>0.000</td><td></td><td>1.000</td><td></td><td>0.000</td><td></td><td></td><td></td></tr>
                  <tr><th>2</th><td></td><td>0.000</td><td></td><td>3.500</td><td></td><td>1.000</td><td></td><td>0.000</td><td></td><td></td><td></td></tr>
                  <tr><th>3</th><td></td><td>0.000</td><td></td><td class="cur"><mark>5.000</mark></td><td class="curend"></td><td>1.000</td><td></td><td>0.000</td><td></td><td></td><td></td></tr>
                </tbody>
              </table>
              <div class="hbar"><svg><use href="#chev-l"/></svg><div class="hthumb"></div><svg><use href="#chev-r"/></svg></div>
            </div>
          </div>
          <div class="splitter"><button class="round" aria-label="收起"><svg><use href="#chev-r"/></svg></button><span>视场图</span></div>
          <figure class="chart">
            <svg viewBox="0 0 472 390" role="img" aria-label="视场图">
              <rect width="472" height="390" fill="url(#gChart)"/>
              <rect x="69" y="11" width="3" height="312" fill="#aaa"/><rect x="72" y="322" width="389" height="4" fill="#999"/>
              <path d="M69.500 21v300" stroke="#777" stroke-width="7" stroke-dasharray="1 10.240"/>
              <path d="M75 326h386" stroke="#777" stroke-width="7" stroke-dasharray="1 10.300"/>
              <rect x="72.500" y="11.500" width="388" height="311" fill="#fcfcfc" stroke="#666"/>
              <path d="M97.500 12v310M153.500 12v310M210.500 12v310M267.500 12v310M323.500 12v310M380.500 12v310M436.500 12v310M73 54.500h387M73 110.500h387M73 167.500h387M73 223.500h387M73 279.500h387" stroke="#bbb" stroke-dasharray="2 4" fill="none"/>
              <path d="M64 54.500h8M64 110.500h8M64 167.500h8M64 223.500h8M64 279.500h8M97.500 323v8M153.500 323v8M210.500 323v8M267.500 323v8M323.500 323v8M380.500 323v8M436.500 323v8" stroke="#333"/>
              <ellipse cx="267.500" cy="166" rx="141.500" ry="140.500" fill="none" stroke="#000" stroke-width="2" stroke-dasharray="16 16"/>
              <circle cx="267.500" cy="26" r="5" fill="url(#gPoint)"/><circle cx="267.500" cy="68" r="5" fill="#008000"/><circle cx="267.500" cy="166" r="5" fill="#008000"/>
              <g class="ylab"><text x="60" y="60">4.0</text><text x="60" y="116">2.0</text><text x="60" y="172">0.0</text><text x="60" y="228">-2.0</text><text x="60" y="284">-4.0</text></g>
              <g class="xlab"><text x="98" y="353">-6.0</text><text x="154" y="353">-4.0</text><text x="211" y="353">-2.0</text><text x="268" y="353">0.0</text><text x="324" y="353">2.0</text><text x="381" y="353">4.0</text><text x="437" y="353">6.0</text><text class="axis" x="267" y="377">X角度 (°)</text><text class="axis" transform="translate(20 166) rotate(-90)">Y角度 (°)</text></g>
            </svg>
          </figure>
        </div>
      </article>
    </div>
  </section>
</main>

<footer class="status"><span>F/# = 8</span><span>EFFL: 400</span><span>WFNO: 7.93382</span><span>ENPD: 50</span><span>TOTR: 0</span></footer>
</body>
</html>
```
FILE: styles.css
```css
*, *::before, *::after { box-sizing: border-box; }
html, body { height: 100%; }
body {
  margin: 0;
  display: flex;
  flex-direction: column;
  border-left: 3px solid #111;
  overflow: hidden;
  background: #fff;
  color: #000;
  font: 15px/20px "Open Sans", "Noto Sans CJK SC", sans-serif;
}
button { margin: 0; padding: 0; border: 0; background: none; font: inherit; color: inherit; }
h2 { margin: 0; font: inherit; }
svg { display: block; flex: none; }
.defs { position: absolute; width: 0; height: 0; }
.i20 { width: 20px; height: 20px; }
.i18 { width: 18px; height: 18px; }
.caret { width: 7px; height: 4px; }
input, select { font: inherit; color: inherit; margin: 0; }

/* title bar */
.titlebar { display: flex; height: 34px; flex: none; position: relative; background: linear-gradient(#f3f3f3, #fafafa); }
.titlebar::before { content: ""; position: absolute; left: 40%; top: 0; width: 300px; height: 1px; background: linear-gradient(90deg, #c4b8b4 20%, #222 20%); }
.titlebar::after { content: ""; position: absolute; right: 56px; top: 0; width: 358px; height: 3px; background: linear-gradient(#ccc, #e6e6e6); }
.qat { display: flex; align-items: flex-start; padding: 4px 0 0 2px; }
.qat button { padding: 0 3px; height: 20px; display: flex; align-items: center; }
.qsep { width: 1px; height: 16px; background: #999; margin: 2px 10px 0 13px; }
.qsep.light { background: #b4c4d8; margin: 2px 10px 0 10px; }
.qat .winsbtn { gap: 3px; padding-left: 6px; }
.blue { color: #2a96d8; }
.orange { color: #e06a38; }
.blue svg, .orange svg { height: 18px; }
.apptitle { flex: 1; text-align: center; font-family: "Noto Sans CJK SC", sans-serif; font-size: 16px; line-height: 16px; white-space: nowrap; }
.winctl { display: flex; width: 252px; justify-content: flex-end; gap: 44px; padding: 11px 25px 0 0; align-items: flex-start; }
.winctl svg { width: 14px; height: 14px; }

/* ribbon tabs */
.tabs { display: flex; flex: none; height: 30px; padding: 0; border-bottom: 1px solid #b0b0b4; background: linear-gradient(#fafafa, #fff); }
.tab { padding: 0 16px; height: 29px; line-height: 32px; }
.tab.file { padding: 0 12px; border-radius: 3px 3px 0 0; color: #fff; background: linear-gradient(#254a9e, #10296f); margin-right: 6px; }
.tab.active { padding: 0 12px; margin-right: 3px; height: 30px; background: #fff; border: 1px solid #b8b8bc; border-bottom: 0; border-radius: 4px 4px 0 0; }
.search { margin-left: auto; display: flex; align-items: center; gap: 8px; }
.search input { width: 175px; height: 21px; border: 1px solid #a8a8a8; background: #fff; padding: 0 9px; margin-top: -4px; appearance: none; border-radius: 0; }
.search input::placeholder { color: #888; }
.search button { margin-top: -4px; }

/* ribbon */
.ribbon { display: flex; flex: none; height: 113px; background: linear-gradient(#fff, #f3f4f6 40%, #dadee2); border-bottom: 1px solid #5a6b7d; }
.group { display: flex; flex-direction: column; margin: 2px 0 1px; padding: 2px 8px 0 10px; border-right: 2px solid #a6a9ad; position: relative; }
.g-sys { padding: 2px 7px 0 4px; }
.g-mode { padding: 1px 10px 0 10px; }
.group.wide { padding: 2px 9px 0 13px; }
.group.wide .items { gap: 5px; }
.g-conf .items { gap: 2px; }
.items { display: flex; flex: 1; align-items: flex-start; }
.group h2 { text-align: center; color: #555; line-height: 20px; height: 20px; }
.big { padding: 2px 3px 0; line-height: 16px; white-space: nowrap; text-align: center; }
.big > svg { width: 40px; height: 40px; margin: 0 auto 3px; }
.big > svg.caret { width: 7px; height: 4px; margin: 6px auto 0; }
button:disabled { color: #999; }
button.big:disabled svg, button.small:disabled svg { opacity: .5; }
.column { display: flex; flex-direction: column; align-items: flex-start; }
.small { display: flex; align-items: center; gap: 1px; height: 28px; padding: 0 3px; border: 1px solid transparent; white-space: nowrap; }
.small svg { width: 20px; height: 20px; }
.small.on { border-color: #c29b29; border-radius: 3px; background: linear-gradient(#fce0a4, #fdc35c 55%, #fed580); }
.launch { position: absolute; right: 6px; bottom: 3px; width: 10px; height: 10px; }

/* main split */
main { display: flex; flex: 1; min-height: 0; }
.side { display: flex; flex-direction: column; flex: none; width: 365px; border-right: 6px solid #8b8e96; background: linear-gradient(#fff, #fff 8%, #e6e7eb 70%, #d8dce0); }
.sidehead { display: flex; align-items: center; gap: 5px; flex: none; height: 27px; padding: 0 6px 2px 8px; color: #fff; background: linear-gradient(#2a4b9f, #0f2a70); }
.sidectl { display: flex; align-items: center; gap: 13px; margin-left: auto; color: #dce4f4; }
.sidectl .dn { width: 11px; height: 6px; }
.update { display: flex; align-items: center; gap: 6px; flex: none; height: 29px; padding: 2px 8px 0; background: #fff; border-bottom: 1px solid #aaa; }
.sidescroll { display: flex; flex: 1; min-height: 0; }
.sidebody { flex: 1; min-width: 0; overflow: hidden; padding-top: 3px; white-space: nowrap; }
.field { display: flex; flex-direction: column; height: 61px; padding-left: 40px; }
.field label { height: 26px; line-height: 18px; }
.field label.in { padding-left: 5px; }
.sel { display: grid; width: 250px; }
.field .sel, .field input { margin-left: 19px; width: 250px; }
.sel > * { grid-area: 1 / 1; }
.sel svg { width: 12px; height: 12px; justify-self: end; align-self: center; margin-right: 6px; color: #555; pointer-events: none; }
select { appearance: none; width: 100%; height: 29px; border: 1px solid #acacac; border-radius: 0; padding: 0 7px 2px; background: linear-gradient(#f0f0f0, #e4e4e4); }
.field input { height: 29px; border: 1px solid #abadb3; background: #fff; padding: 0 3px 7px; }
.checks { padding-left: 35px; margin-top: -2px; }
.checks label { display: flex; align-items: center; gap: 6px; height: 28px; }
.checks input { appearance: none; width: 16px; height: 16px; background: #fff; border: 1px solid #666; display: grid; }
.checks input:disabled { background: #e6e6e6; border-color: #bcbcbc; }
.checks input:checked::after { content: ""; width: 6px; height: 11px; margin: 0 0 0 4px; border: solid #222; border-width: 0 2px 2px 0; transform: rotate(40deg); }
.node { position: relative; height: 21px; line-height: 21px; padding-left: 39px; }
.node.top { padding-left: 21px; }
.node::before { content: ""; position: absolute; left: 23px; top: 6px; border-left: 6px solid #444; border-top: 5px solid transparent; border-bottom: 5px solid transparent; }
.node.open::before { left: 18px; top: 9px; border: 5px solid transparent; border-top: 5px solid #444; border-bottom: 0; }
.node.top.open::before { left: 0; }
.node.dim { color: #777; }
.checks + .node { margin-top: 1px; }
.openfield { display: block; margin: 11px 0 11px 55px; width: 157px; height: 31px; border: 1px solid #707070; background: #ddd; }
.wave { padding: 9px 0 4px 58px; display: flex; flex-direction: column; }
.wave label { height: 28px; margin-left: -14px; }
.wave select { height: 28px; }
.wave button { width: 250px; height: 23px; border: 1px solid #707070; background: #ddd; }
.vbar { width: 21px; margin-top: 3px; flex: none; display: flex; flex-direction: column; background: #f0f0f0; color: #999; }
.vbar svg { width: 12px; height: 12px; margin: 6px auto; }
.vthumb { background: #cdcdcd; margin: 19px 0 0; flex: 0 1 575px; }
.vbar svg:last-child { margin-top: auto; }

/* documents */
.work { flex: 1; min-width: 0; display: flex; flex-direction: column; }
.doctabs { display: flex; align-items: flex-end; flex: none; height: 30px; background: #cacdd2; border-bottom: 1px solid #8b929a; }
.tabcurve { width: 30px; height: 25px; margin-bottom: -1px; }
.doctab { display: flex; align-items: center; gap: 6px; height: 25px; margin-bottom: -1px; padding: 0 8px 2px 0; background: #fff; border: solid #8b929a; border-width: 1px 1px 0 0; }
.doctab > svg { margin-left: 2px; }
.doctab svg { color: #555; }
.doctab button svg { width: 11px; height: 11px; }
.tabmenu { margin: auto 1px 8px auto; }
.toolbar { display: flex; align-items: center; flex: none; height: 37px; padding: 2px 0 0 44px; background: #fff; border-bottom: 1px solid #aaacb2; }
.toolbar button { display: flex; align-items: center; justify-content: center; width: 26px; height: 28px; }
.toolbar svg { width: 20px; height: 20px; }
.toolbar svg.caret { width: 7px; height: 4px; }
.toolbar .upd { width: 116px; justify-content: flex-start; gap: 6px; border-right: 1px solid #b8c4d8; white-space: nowrap; }
.toolbar .drop { width: 39px; gap: 4px; }
.sep { width: 3px; height: 28px; border-right: 1px solid #b8c4d8; }
.props { display: flex; align-items: center; flex: none; height: 34px; padding: 0 0 1px 2px; border-bottom: 1px solid #9a9da4; background: linear-gradient(#d6d9de, #bbbec5); }
.round { display: flex; align-items: center; justify-content: center; width: 29px; height: 29px; margin-right: 5px; border: 1px solid #aaa; border-radius: 50%; background: #fff; color: #555; flex: none; }
.round svg { width: 12px; height: 12px; }
.round:disabled { background: none; color: #999; }
.what { margin: 0 9px 0 1px; white-space: nowrap; }
.conf { display: flex; align-items: center; margin-left: 573px; gap: 1px; white-space: nowrap; }
.conf b { margin-right: 8px; }
.canvas { flex: 1; position: relative; padding: 11px 0 0 5px; background: linear-gradient(#fdfdfd, #e4e5ea 60%, #dfe1e5 80%, #d9dde1); }

/* data grids */
.gridbox { width: 951px; border: 1px solid #7e96ae; border-radius: 8px; overflow: hidden; }
.grid { table-layout: fixed; width: 949px; border-spacing: 0; font-family: "Noto Sans CJK SC", sans-serif; font-size: 17px; line-height: 24px; }
.grid th, .grid td { padding: 0; height: 29px; border: solid #c8c8cc; border-width: 0 1px 1px 0; white-space: nowrap; }
.grid thead th { background: linear-gradient(#d9dce1, #bdc0c7); border-color: #9c9fa6; border-bottom: 0; overflow: hidden; }
.grid tbody th { background: linear-gradient(90deg, #dadde2, #bcbfc6); border-color: #a4a7ae; }
.grid td { text-align: right; padding-right: 3px; background: #fff; }
.grid td.c { text-align: center; padding: 0; }
.grid .hl td { background: #d2d2ff; }
.grid tr > :last-child { border-right: 0; }
.lensgrid tbody tr:last-child > * { border-bottom: 0; height: 28px; }
.corner { vertical-align: bottom; }
.corner::after { content: ""; display: block; width: 9px; height: 9px; margin: 0 3px 3px auto; background: linear-gradient(135deg, transparent 50%, #8c8f94 50%); }
.type { display: flex; justify-content: space-between; padding: 0 3px 0 3px; }
.type button { display: flex; align-items: center; gap: 8px; line-height: 24px; }
.type .caret { width: 9px; height: 6px; }
.w21 { width: 21px; } .w23 { width: 23px; } .w24 { width: 24px; } .w25 { width: 25px; }
.w48 { width: 48px; } .w49 { width: 49px; } .w58 { width: 58px; } .w60 { width: 60px; }
.w74 { width: 74px; } .w75 { width: 75px; } .w76 { width: 76px; } .w78 { width: 78px; }
.w101 { width: 101px; } .w121 { width: 121px; } .w150 { width: 150px; }

/* floating field editor */
.window { position: absolute; left: 2px; top: 206px; width: 1250px; height: 500px; display: flex; flex-direction: column; border: 1px solid #9a9da6; background: linear-gradient(#fff, #f6f7f8 20%, #e6e7eb 60%, #dcdfe3); }
.wintitle { display: flex; align-items: center; gap: 6px; flex: none; height: 28px; padding: 0 12px 3px 7px; border-top: 2px solid #fff; border-bottom: 1px solid #a9bdd3; background: linear-gradient(#ffffff60, #ffffff00), linear-gradient(90deg, #b9d7ff 20%, #cfe3fd 50%, #fff 90%); }
.winbtns { display: flex; align-items: center; gap: 12px; margin-left: auto; color: #555; }
.window .toolbar { height: 35px; padding-top: 0; }
.window .props { height: 33px; }
.window .conf { margin-left: 405px; }
.ftype { margin-left: auto; padding-right: 8px; }
.winbody { display: flex; flex: 1; min-height: 0; }
.fieldpane { width: 731px; padding: 12px 0 0 5px; overflow: hidden; }
.gridbox.clip { width: 726px; }
.fieldgrid { width: 796px; }
.grid.fieldgrid td { background: #90ee90; }
.grid.fieldgrid td.cur { border: 2px solid #000; border-right: 1px solid #c8c8cc; }
.grid.fieldgrid td.curend { border: 2px solid #000; border-left: 0; }
mark { background: #57bdb0; color: #123a5a; display: inline-block; line-height: 23px; }
.hbar { display: flex; align-items: center; height: 20px; padding-left: 21px; background: #f0f0f0; color: #999; }
.hbar svg { width: 12px; height: 12px; margin: 0 5px; }
.hbar svg:last-child { margin-left: auto; }
.hthumb { width: 410px; height: 20px; background: #cdcdcd; }
.splitter { width: 35px; flex: none; display: flex; flex-direction: column; align-items: center; gap: 5px; padding-top: 2px; border: solid #a0a3aa; border-width: 0 1px; background: linear-gradient(90deg, #bbbec5, #d6d9de); }
.splitter .round { margin: 0; }
.splitter span { writing-mode: vertical-rl; text-orientation: sideways; }
.chart { margin: 5px 4px 4px 3px; flex: 1; border: 1px solid #000; background: #f4f4f4; }
.chart svg { width: 100%; height: 100%; }
.chart text { font-size: 15px; fill: #333; }
.chart .ylab { text-anchor: end; }
.chart .xlab { text-anchor: middle; }
.chart text.axis { font-size: 20px; fill: #000; }

/* status bar */
.status { display: grid; grid-template-columns: 365px repeat(3, 370px) 1fr; flex: none; height: 19px; color: #fff; background: linear-gradient(#254a9e, #132f78); line-height: 21px; }
.status span { padding-left: 6px; border-left: 1px solid #3c64b0; overflow: hidden; }
.status span:first-child { border: 0; padding-left: 3px; }
```
